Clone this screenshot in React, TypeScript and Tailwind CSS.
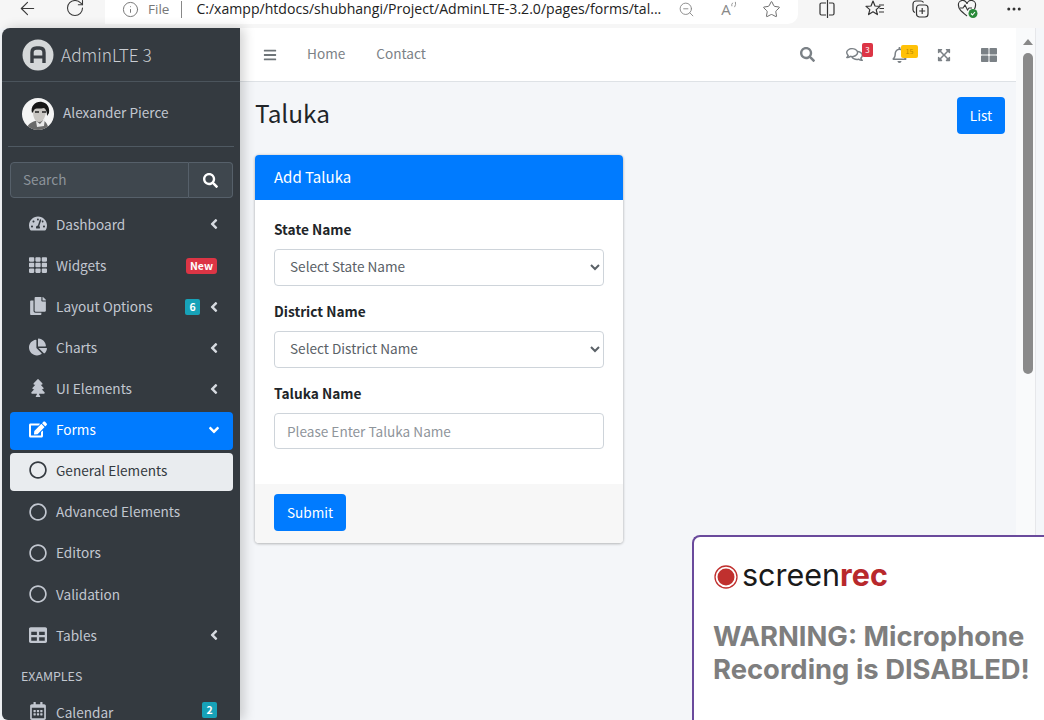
import React from "react";
import {
  FaTachometerAlt, FaTh, FaCopy, FaChartPie, FaTree, FaEdit, FaRegCircle, FaTable,
  FaRegCalendarAlt, FaSearch, FaBars, FaRegComments, FaRegBell, FaExpandArrowsAlt,
  FaThLarge, FaAngleLeft, FaAngleDown,
} from "react-icons/fa";
import { ArrowLeft, RotateCw, Info, ZoomOut, Star, MoreHorizontal } from "lucide-react";

const font = "font-['Noto_Sans_CJK_SC','Noto_Sans',sans-serif]";

function Logo() {
  return (
    <svg viewBox="0 0 32 32" className="w-[32px] h-[32px] shrink-0">
      <circle cx="16" cy="16" r="15.5" fill="#d5d8d9" />
      <path d="M10 24V13.5C10 10.5 12 9 14.5 9h3C20 9 22 10.5 22 13.5V24" fill="none" stroke="#3a3f44" strokeWidth="3.4" />
      <path d="M10 18h12" stroke="#3a3f44" strokeWidth="3" />
    </svg>
  );
}

function Avatar() {
  return (
    <svg viewBox="0 0 32 32" className="w-[32px] h-[32px] shrink-0 rounded-full">
      <rect width="32" height="32" fill="#f4f4f4" />
      <path d="M4 32c1-5 5-8 9-9l7-1c4 1 6 5 7 10z" fill="#6a6a6a" />
      <path d="M11 14c0-6 3-8 7-8s7 2 6 8c-1 6-3 10-7 10s-6-5-6-10z" fill="#c9c6c2" />
      <path d="M10 15c-2-7 4-12 10-11 5 1 8 5 7 11l-2 3c0-4-1-7-3-8-4 1-7 0-9 1-2 1-1 3-3 4z" fill="#161616" />
      <path d="M13 14h4M20 14h4" stroke="#222" strokeWidth="1.5" />
      <path d="M14 23l4 3 5-6-1 8-7 1z" fill="#e8e8e8" />
    </svg>
  );
}

type Item = {
  label: string;
  icon: React.ReactNode;
  arrow?: boolean;
  badge?: React.ReactNode;
  state?: "blue" | "light";
};

const ic = "w-[18px] h-[18px]";
const tinyBadge = "w-[15px] h-[16px] bg-[#17a2b8] text-white text-[10.5px] font-bold leading-[16px] text-center rounded-[2px]";

const items: Item[] = [
  { label: "Dashboard", icon: <FaTachometerAlt className="w-[19px] h-[19px]" />, arrow: true },
  {
    label: "Widgets",
    icon: <FaTh className={ic} />,
    badge: <span className="w-[31px] h-[16px] mt-[2px] bg-[#dc3545] text-white text-[10.5px] font-bold leading-[16px] text-center rounded-[3px]">New</span>,
  },
  {
    label: "Layout Options",
    icon: <FaCopy className={ic} />,
    arrow: true,
    badge: <span className={`${tinyBadge} mr-[6px]`}>6</span>,
  },
  { label: "Charts", icon: <FaChartPie className={ic} />, arrow: true },
  { label: "UI Elements", icon: <FaTree className={ic} />, arrow: true },
  { label: "Forms", icon: <FaEdit className="w-[19px] h-[19px]" />, state: "blue" },
  { label: "General Elements", icon: <FaRegCircle className={ic} />, state: "light" },
  { label: "Advanced Elements", icon: <FaRegCircle className={ic} /> },
  { label: "Editors", icon: <FaRegCircle className={ic} /> },
  { label: "Validation", icon: <FaRegCircle className={ic} /> },
  { label: "Tables", icon: <FaTable className={ic} />, arrow: true },
];

function NavRow({ item }: { item: Item }) {
  const color =
    item.state === "blue"
      ? "bg-[#007bff] text-white"
      : item.state === "light"
      ? "bg-[#e9ecef] text-[#343a40]"
      : "text-[#c2c7d0]";
  return (
    <div className={`h-[38px] mb-[3.1px] rounded-[4px] flex items-center pl-[19px] pr-[16px] text-[13.6px] shrink-0 ${color}`}>
      <span className="w-[18px] flex justify-center shrink-0 -mt-[3px]">{item.icon}</span>
      <span className="ml-[9px] -mt-[3px]">{item.label}</span>
      <span className="ml-auto flex items-center -mt-[2px]">
        {item.badge}
        {item.arrow && <FaAngleLeft className="w-[16px] h-[16px] -mr-[5px] text-[#d6dae0]" />}
        {item.state === "blue" && <FaAngleDown className="w-[16px] h-[16px] -mr-[5px]" />}
      </span>
    </div>
  );
}

function Sidebar() {
  return (
    <aside className="ml-[2px] w-[238px] shrink-0 bg-[#343a40] rounded-tl-[8px] rounded-bl-[6px] overflow-hidden flex flex-col shadow-[4px_0_12px_rgba(0,0,0,0.18)] z-10">
      <div className="h-[54px] shrink-0 border-b border-[#4b545c] flex items-center pl-[20px] text-[#c9cdd2] text-[17.3px] font-light gap-[7px]">
        <Logo />
        <span className="mt-[1px]">AdminLTE 3</span>
      </div>
      <div className="h-[65px] shrink-0 mx-[6px] border-b border-[#4f5962] flex items-center pl-[14px] gap-[9px] text-[#c2c7d0] text-[13.6px]">
        <Avatar />
        <span className="-mt-[3px]">Alexander Pierce</span>
      </div>
      <div className="ml-[8px] mr-[7px] mt-[15px] h-[36px] shrink-0 flex">
        <div className="w-[179px] bg-[#3f474e] border border-[#56606a] rounded-l-[4px] flex items-center pl-[12px] pb-[2px] text-[13.6px] text-[#8d949b]">Search</div>
        <div className="flex-1 bg-[#3f474e] border border-[#56606a] border-l-0 rounded-r-[4px] flex items-center justify-center text-white">
          <FaSearch className="w-[15px] h-[15px]" />
        </div>
      </div>
      <nav className="mt-[8.4px] ml-[8px] mr-[7px] flex flex-col">
        {items.map((it) => <NavRow key={it.label} item={it} />)}
        <div className="h-[36px] shrink-0 flex items-center pl-[11px] text-[12.4px] text-[#c2c7d0]">EXAMPLES</div>
        <div className="mt-[6px] h-[27px] shrink-0 flex items-start pt-[2px] pl-[19px] pr-[16px] text-[13.6px] text-[#c2c7d0]">
          <span className="w-[18px] flex justify-center"><FaRegCalendarAlt className="w-[16px] h-[18px]" /></span>
          <span className="ml-[9px] leading-[20px]">Calendar</span>
          <span className={`ml-auto ${tinyBadge}`}>2</span>
        </div>
      </nav>
    </aside>
  );
}

function Navbar() {
  return (
    <header className="h-[54px] shrink-0 bg-white border-b border-[#dee2e6] flex items-center text-[#7b8186] text-[13.6px] pl-[23px]">
      <FaBars className="w-[14px] h-[14px] text-[#6e7478]" />
      <span className="ml-[30px] -mt-[2px]">Home</span>
      <span className="ml-[31px] -mt-[2px]">Contact</span>
      <div className="ml-auto flex items-center text-[#7b8186] pr-[19px]">
        <FaSearch className="w-[15px] h-[15px]" />
        <span className="relative ml-[31px]">
          <FaRegComments className="w-[17px] h-[17px]" />
          <span className="absolute -top-[3px] -right-[10px] w-[11px] h-[14px] bg-[#dc3545] rounded-[2px] text-white text-[8px] leading-[14px] text-center">3</span>
        </span>
        <span className="relative ml-[29px]">
          <FaRegBell className="w-[15px] h-[16px]" />
          <span className="absolute -top-[2px] -right-[11px] w-[17px] h-[13px] bg-[#ffc107] rounded-[2px] text-[#b98a00] text-[7px] leading-[13px] text-center">15</span>
        </span>
        <FaExpandArrowsAlt className="w-[14px] h-[14px] ml-[30px]" />
        <FaThLarge className="w-[16px] h-[16px] ml-[30px]" />
      </div>
    </header>
  );
}

function Field({ label, children, className = "" }: { label: string; children: React.ReactNode; className?: string }) {
  return (
    <div className={className}>
      <label className="block font-bold text-[13.7px] leading-[18px] text-[#212529] mb-[11px]">{label}</label>
      {children}
    </div>
  );
}

function FormCard() {
  const sel = "block w-full h-[37px] bg-white border border-[#ced4da] rounded-[4px] pl-[11px] pr-[5px] pb-[3px] text-[13.6px] text-[#5a6167] " + font;
  return (
    <section className="w-[368px] rounded-[4px] bg-white shadow-[0_0_3px_rgba(0,0,0,0.15),0_1px_3px_rgba(0,0,0,0.2)] overflow-hidden">
      <div className="h-[45px] bg-[#007bff] text-white text-[15px] flex items-center pl-[19px]">Add Taluka</div>
      <div className="px-[19px] pt-[20px] h-[284px]">
        <Field label="State Name">
          <select className={sel} defaultValue="s"><option value="s">Select State Name</option></select>
        </Field>
        <Field label="District Name" className="mt-[16px]">
          <select className={sel} defaultValue="d"><option value="d">Select District Name</option></select>
        </Field>
        <Field label="Taluka Name" className="mt-[16px]">
          <input placeholder="Please Enter Taluka Name" className={"block w-full h-[36px] border border-[#ced4da] rounded-[4px] px-[12px] pb-[1px] text-[13.6px] placeholder:text-[#8f959b] " + font} />
        </Field>
      </div>
      <div className="h-[59px] bg-[#f7f7f7] px-[19px] pt-[10px]">
        <button className="w-[72px] h-[37px] rounded-[4px] bg-[#007bff] text-white text-[13.6px] pb-[1px]">Submit</button>
      </div>
    </section>
  );
}

function Scrollbar() {
  return (
    <div className="w-[28px] shrink-0 flex">
      <div className="w-[20px] bg-[#f9fafb] border-r border-[#e6e7ea] flex flex-col pl-[7px]">
        <svg viewBox="0 0 10 6" className="w-[10px] h-[6px] mt-[11px] shrink-0"><path d="M5 0l5 6H0z" fill="#888" /></svg>
        <div className="mt-[8px] h-[321px] w-[10px] rounded-[5px] bg-[#8a8a8a]" />
      </div>
    </div>
  );
}

function BrowserBar() {
  return (
    <div className="h-[28px] shrink-0 bg-[#f6f6f6] flex items-start text-[#3a3a3a] font-['Open_Sans',sans-serif] overflow-hidden">
      <ArrowLeft className="w-[21px] h-[21px] ml-[17px] -mt-[2px]" strokeWidth={1.3} />
      <RotateCw className="w-[20px] h-[20px] ml-[27px] -mt-[2px]" strokeWidth={1.3} />
      <div className="ml-[20px] w-[693px] h-[24px] bg-white rounded-br-[10px] flex items-center pl-[17px] pb-[6px]">
        <Info className="w-[17px] h-[17px] text-[#777]" strokeWidth={1.4} />
        <span className="ml-[9px] text-[13.5px] text-[#777]">File</span>
        <span className="ml-[12px] h-[17px] w-px bg-[#888]" />
        <span className="ml-[14px] text-[14.09px] text-[#222] whitespace-nowrap">C:/xampp/htdocs/shubhangi/Project/AdminLTE-3.2.0/pages/forms/tal...</span>
        <ZoomOut className="w-[17px] h-[17px] ml-[17px] text-[#888]" strokeWidth={1.3} />
        <span className="ml-[26px] text-[15px] text-[#888]">A</span>
        <svg viewBox="0 0 8 8" className="w-[7px] h-[7px] -mt-[9px] text-[#888]"><path d="M1 6a4 4 0 0 1 1-4M4 7a7 7 0 0 0 1-6" fill="none" stroke="currentColor" /></svg>
        <Star className="w-[19px] h-[19px] ml-[24px] text-[#666]" strokeWidth={1.2} />
      </div>
      <svg viewBox="0 0 18 18" className="w-[18px] h-[18px] ml-[20px] mt-0"><path d="M8 3H3.500A1.500 1.500 0 0 0 2 4.500v9A1.500 1.500 0 0 0 3.500 15H8M11 3h3.500A1.500 1.500 0 0 1 16 4.500v9a1.500 1.500 0 0 1-1.500 1.500H11M9.500 0v18" fill="none" stroke="#333" strokeWidth="1.2" /></svg>
      <svg viewBox="0 0 20 18" className="w-[20px] h-[18px] ml-[29px] mt-0"><path d="M8 1l2 5 5 .4-3.800 3.200 1.200 5-4.400-2.800L3.600 14.600l1.200-5L1 6.400 6 6z" fill="none" stroke="#333" strokeWidth="1.2" strokeLinejoin="round" /><path d="M14 5h5M14.500 8.500H19M14 12h5" stroke="#333" strokeWidth="1.1" /></svg>
      <svg viewBox="0 0 20 20" className="w-[20px] h-[20px] ml-[25px] -mt-[1px]"><path d="M5 13.500A3 3 0 0 1 3 11V5a3 3 0 0 1 3-3h5a3 3 0 0 1 2.500 1.500" fill="none" stroke="#333" strokeWidth="1.200" /><rect x="6.500" y="6" width="11.500" height="12" rx="3" fill="none" stroke="#333" strokeWidth="1.200" /><path d="M12.200 9v6M9.200 12h6" stroke="#333" strokeWidth="1.200" /></svg>
      <svg viewBox="0 0 22 20" className="w-[22px] h-[20px] ml-[27px] -mt-[1px]"><path d="M10 17C4 12 1.500 10 1.500 6.500A4.300 4.300 0 0 1 10 5a4.300 4.300 0 0 1 8.500 1.500c0 1.500-.5 2.500-1 3.500" fill="none" stroke="#333" strokeWidth="1.200" /><path d="M3 9h3l2-3 2.500 5L12 9h3" fill="none" stroke="#333" strokeWidth="1.100" /><circle cx="16" cy="14.500" r="4.500" fill="#2a8a3a" /><path d="M14 14.500l1.500 1.500 2.500-3" fill="none" stroke="#fff" strokeWidth="1.100" /></svg>
      <MoreHorizontal className="w-[18px] h-[18px] ml-[26px] mt-0 text-[#333]" strokeWidth={2} />
    </div>
  );
}

function RecOverlay() {
  return (
    <div className="absolute left-[692px] top-[535px] w-[352px] h-[185px] bg-white border-l-2 border-t-2 border-[#6a4a9c] rounded-tl-[8px] pl-[20px] pt-[27px] font-['Inter',sans-serif]">
      <div className="flex items-center">
        <svg viewBox="0 0 24 24" className="w-[24px] h-[24px]"><circle cx="12" cy="12" r="11" fill="none" stroke="#c0302e" strokeWidth="1.300" /><circle cx="12" cy="12" r="8.500" fill="#c0302e" /></svg>
        <span className="ml-[4px] text-[30.5px] leading-[30px] font-normal text-[#1a1a1a] -mt-[4px]">screen<span className="font-bold text-[#b8282c]">rec</span></span>
      </div>
      <div className="-ml-[1px] mt-[30px] text-[27.4px] leading-[33px] font-bold text-[#7e7e7e] whitespace-nowrap">
        WARNING: Microphone<br />Recording is DISABLED!
      </div>
    </div>
  );
}

export default function App() {
  return (
    <div className={`relative w-[1044px] h-[720px] overflow-hidden bg-[#f4f6f9] flex flex-col ${font}`}>
      <BrowserBar />
      <div className="flex flex-1 min-h-0">
        <Sidebar />
        <main className="flex-1 min-w-0 flex flex-col">
          <Navbar />
          <div className="flex-1 pl-[15px] pr-[11px]">
            <div className="flex items-start justify-between pt-[15px] h-[73px]">
              <h1 className="text-[24.4px] leading-[33px] -mt-[1px] text-[#212529]">Taluka</h1>
              <button className="w-[48px] h-[37px] rounded-[4px] bg-[#007bff] text-white text-[13.6px]">List</button>
            </div>
            <FormCard />
          </div>
        </main>
        <Scrollbar />
      </div>
      <RecOverlay />
    </div>
  );
}
